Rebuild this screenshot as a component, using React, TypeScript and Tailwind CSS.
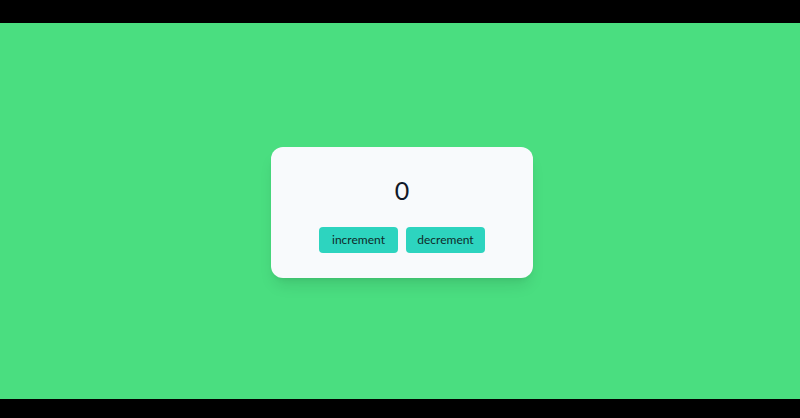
import { useState } from 'react'

export default function App(){
  const [count,setCount] = useState(0)

  return (
    <div className="w-[800px] h-[418px] bg-black flex flex-col font-['Lato','Noto_Sans',sans-serif]">
      <div className="h-[23px] shrink-0"></div>
      <div className="h-[376px] bg-[#4ade80] flex items-center justify-center pl-1 pt-[3px]">
        {/* Counter card */}
        <div className="w-[262px] bg-[#f8fafc] rounded-xl shadow-lg flex flex-col items-center pt-[27px] pb-[25px]">
          <div className="text-[25px] leading-8 text-[#111827]">{count}</div>
          <div className="flex gap-2 mt-[21px]">
            <button className="w-[79px] h-[26px] rounded bg-[#2dd4bf] text-[12px] text-[#0f2a2a]" onClick={()=>setCount(count+1)}>increment</button>
            <button className="w-[79px] h-[26px] rounded bg-[#2dd4bf] text-[12px] text-[#0f2a2a]" onClick={()=>setCount(count-1)}>decrement</button>
          </div>
        </div>
      </div>
    </div>
  )
}
